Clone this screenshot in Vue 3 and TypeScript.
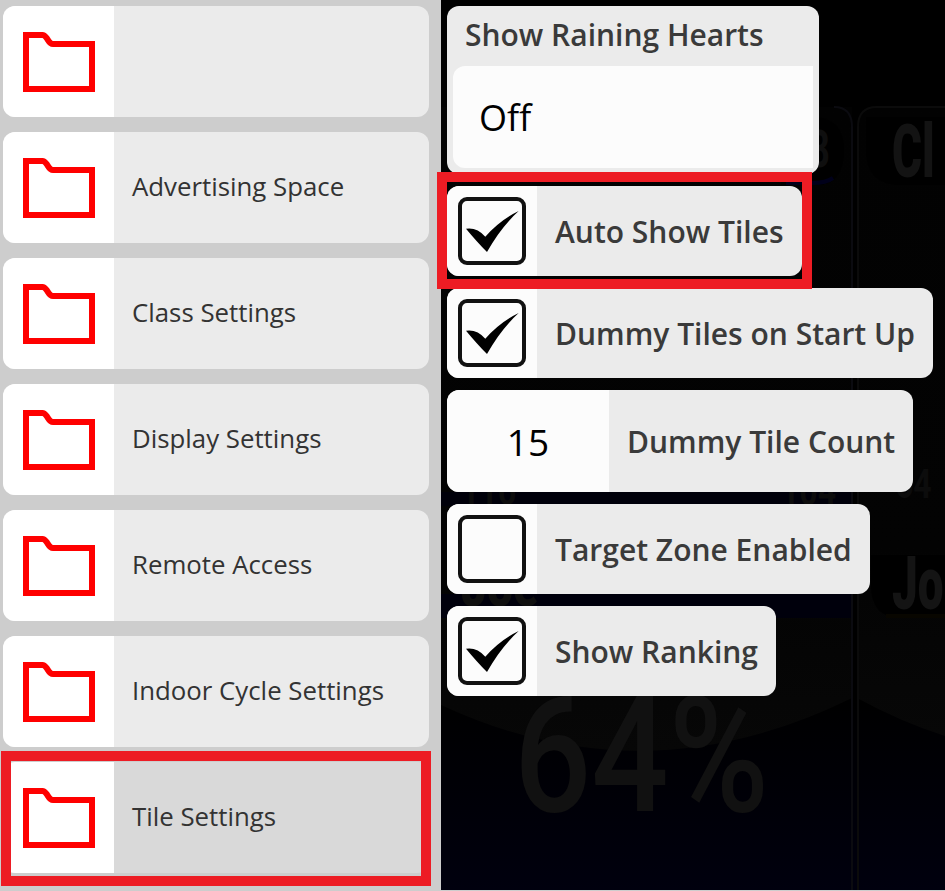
<script setup lang="ts">
const folders: { label: string; selected?: boolean }[] = [
  { label: '' },
  { label: 'Advertising Space' },
  { label: 'Class Settings' },
  { label: 'Display Settings' },
  { label: 'Remote Access' },
  { label: 'Indoor Cycle Settings' },
  { label: 'Tile Settings', selected: true },
]
const ghosts = [
  { text: '8', cls: 'g-8' },
  { text: 'Cl', cls: 'g-cl' },
  { text: 'Jo', cls: 'g-jo' },
  { text: '64', cls: 'g-54' },
  { text: '116', cls: 'g-116' },
  { text: '104', cls: 'g-104' },
  { text: 'Joe', cls: 'g-joe' },
  { text: '64%', cls: 'g-pct' },
]
const tick = 'M4 27.7Q15 26 23.3 35.7Q38 19 56.7 10Q39 26 25 51Q15 41 4 27.7Z'
</script>

<template>
  <div class="page">
    <nav class="side">
      <div v-for="f in folders" :key="f.label" class="folder" :class="{ selected: f.selected }">
        <div class="folder-icon">
          <svg width="72" height="60" viewBox="0 0 72 60" fill="none">
            <path d="M3 3H19.5C21.5 3 22.5 4.5 24 6.5C25.5 9 27 12 30 12H69V57H3Z" stroke="#f00" stroke-width="6" stroke-linejoin="miter" />
          </svg>
        </div>
        <div class="folder-label">{{ f.label }}</div>
        <div v-if="f.selected" class="callout callout-side"></div>
      </div>
    </nav>

    <main class="stage">
      <svg class="backdrop" width="504" height="890" viewBox="0 0 504 890" fill="none">
        <defs>
          <linearGradient id="tileFill" x1="0" y1="0" x2="0" y2="1">
            <stop offset="0" stop-color="#020202" />
            <stop offset="0.7" stop-color="#030303" />
            <stop offset="1" stop-color="#070707" />
          </linearGradient>
        </defs>
        <path d="M0 705Q204 800 411 698V107H0Z" fill="url(#tileFill)" />
        <path d="M416 698Q460 722 504 736V107H436Q416 107 416 127Z" fill="url(#tileFill)" />
        <path d="M393 107Q411 107 411 127V890" stroke="#0b0b10" stroke-width="2" />
        <path d="M504 107H436Q417 107 417 127V890" stroke="#0b0b0b" stroke-width="2" />
        <path d="M425 117H504V185H460Q425 185 425 150Z" fill="#000" />
        <path d="M340 117H375Q403 120 403 150Q403 185 375 185H340Z" fill="#000" />
        <path d="M345 183H372Q385 183 392 178" stroke="#00001a" stroke-width="4" />
        <path d="M430 555H504V618H460Q430 618 430 585Z" fill="#000" />
        <path d="M445 616H504" stroke="#080600" stroke-width="4" />
        <rect x="0" y="492" width="410" height="14" fill="#00000a" />
        <rect x="0" y="594" width="410" height="24" fill="#00000c" />
      </svg>
      <div v-for="g in ghosts" :key="g.cls" class="ghost" :class="g.cls">{{ g.text }}</div>

      <section class="card">
        <div class="card-title">Show Raining Hearts</div>
        <div class="select-value">Off</div>
      </section>

      <div class="row">
        <div class="check-cell">
          <div class="checkbox">
            <svg width="60" height="60" viewBox="0 0 60 60"><path :d="tick" fill="#000" /></svg>
          </div>
        </div>
        <div class="row-label">Auto Show Tiles</div>
        <div class="callout callout-row"></div>
      </div>

      <div class="row">
        <div class="check-cell">
          <div class="checkbox">
            <svg width="60" height="60" viewBox="0 0 60 60"><path :d="tick" fill="#000" /></svg>
          </div>
        </div>
        <div class="row-label">Dummy Tiles on Start Up</div>
      </div>

      <div class="row row-number">
        <div class="number-cell">15</div>
        <div class="row-label number-label">Dummy Tile Count</div>
      </div>

      <div class="row">
        <div class="check-cell"><div class="checkbox"></div></div>
        <div class="row-label">Target Zone Enabled</div>
      </div>

      <div class="row">
        <div class="check-cell">
          <div class="checkbox">
            <svg width="60" height="60" viewBox="0 0 60 60"><path :d="tick" fill="#000" /></svg>
          </div>
        </div>
        <div class="row-label">Show Ranking</div>
      </div>
    </main>
  </div>
</template>

<style>
html, body { margin: 0; background: #cdcdcd; }
</style>

<style scoped>
.page {
  display: flex;
  width: 945px;
  height: 891px;
  overflow: hidden;
  font-family: "Open Sans", "Noto Sans", sans-serif;
}
.side {
  box-sizing: border-box;
  width: 441px;
  flex: none;
  padding: 6px 12px 0 3px;
  display: flex;
  flex-direction: column;
  gap: 15px;
  background: #cdcdcd;
}
.folder {
  position: relative;
  display: flex;
  height: 111px;
  border-radius: 12px;
  background: #ebebeb;
}
.folder.selected { background: #d9d9d9; }
.folder-icon {
  width: 111px;
  flex: none;
  display: flex;
  align-items: center;
  justify-content: center;
  background: #fff;
  border-radius: 12px 0 0 12px;
}
.folder-label {
  display: flex;
  align-items: center;
  padding: 0 0 4px 18px;
  font-size: 25.8px;
  color: #333;
}
.callout {
  position: absolute;
  box-sizing: border-box;
  border: 10px solid #ed1c24;
  pointer-events: none;
  z-index: 2;
}
.callout-side { top: -11px; bottom: -13px; left: -2px; right: -2px; }
.callout-row { top: -14px; bottom: -13px; left: -10px; right: -10px; }

.stage {
  position: relative;
  flex: 1;
  height: 890px;
  box-sizing: border-box;
  padding: 6px 0 0 6px;
  display: flex;
  flex-direction: column;
  align-items: flex-start;
  gap: 12px;
  background: linear-gradient(#000 0 700px, #00000e 890px);
}
.backdrop { position: absolute; left: 0; top: 0; }
.ghost {
  position: absolute;
  font-family: Roboto, sans-serif;
  color: #0f0f0f;
  line-height: 0.74;
  transform-origin: left top;
  white-space: nowrap;
}
.g-pct { left: 73px; top: 697px; font-size: 162px; font-weight: 500; transform: scaleX(.84); color: #111; }
.g-cl { left: 451px; top: 125px; font-size: 74px; font-weight: 900; transform: scaleX(.62); color: #131313; }
.g-jo { left: 451px; top: 557px; font-size: 74px; font-weight: 900; transform: scaleX(.62); color: #141414; }
.g-8 { left: 368px; top: 131px; font-size: 52px; font-weight: 700; transform: scaleX(.7); }
.g-54 { left: 454px; top: 470px; font-size: 40px; font-weight: 700; transform: scaleX(.8); color: #0c0c0c; }
.g-116 { left: 20px; top: 477px; font-size: 40px; font-weight: 700; transform: scaleX(.8); color: #0c0c0c; }
.g-104 { left: 340px; top: 477px; font-size: 40px; font-weight: 700; transform: scaleX(.8); color: #0c0c0c; }
.g-joe { left: 20px; top: 565px; font-size: 58px; font-weight: 900; transform: scaleX(.8); }

.card {
  position: relative;
  box-sizing: border-box;
  width: 372px;
  height: 168px;
  padding: 0 6px;
  border-radius: 12px;
  background: #ebebeb;
}
.card-title {
  height: 60px;
  padding: 0 0 3px 12px;
  box-sizing: border-box;
  display: flex;
  align-items: center;
  font-size: 30px;
  font-weight: 600;
  color: #3a3a3a;
}
.select-value {
  height: 102px;
  padding-left: 26px;
  display: flex;
  align-items: center;
  font-size: 36px;
  color: #000;
  background: #fcfcfc;
  border-radius: 12px 0 0 12px;
}
.row {
  position: relative;
  display: flex;
  height: 90px;
  border-radius: 12px;
  background: #ebebeb;
}
.row-number { height: 102px; }
.check-cell {
  width: 90px;
  flex: none;
  display: flex;
  align-items: center;
  justify-content: center;
  background: #fcfcfc;
  border-radius: 12px 0 0 12px;
}
.checkbox {
  box-sizing: border-box;
  width: 68px;
  height: 68px;
  border: 4px solid #111;
  border-radius: 9px;
}
.checkbox svg { display: block; }
.number-cell {
  width: 162px;
  flex: none;
  display: flex;
  align-items: center;
  justify-content: center;
  font-size: 37px;
  color: #000;
  background: #fcfcfc;
  border-radius: 12px 0 0 12px;
}
.row-label {
  display: flex;
  align-items: center;
  padding: 0 18px;
  font-size: 30px;
  font-weight: 600;
  color: #3a3a3a;
  white-space: nowrap;
}
</style>
